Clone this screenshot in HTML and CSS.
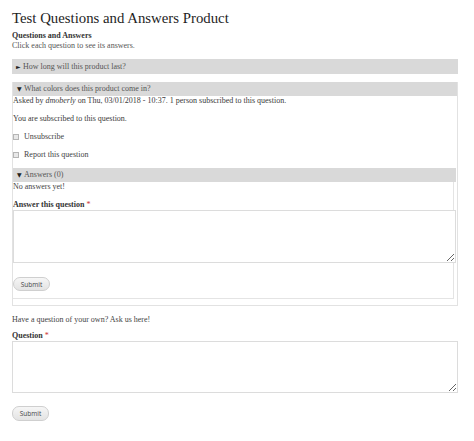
FILE: index.html
```html
<!DOCTYPE html>
<html>
<head>
<meta charset="utf-8">
<link rel="stylesheet" href="styles.css">
</head>
<body>
<div class="page">
  <h1 class="title">Test Questions and Answers Product</h1>
  <h2 class="section-title">Questions and Answers</h2>
  <p class="intro">Click each question to see its answers.</p>

  <div class="question">
    <div class="summary"><span class="arrow">&#9658;</span>How long will this product last?</div>
  </div>

  <div class="question open">
    <div class="summary"><span class="arrow">&#9660;</span>What colors does this product come in?</div>
    <div class="q-body">
      <p class="meta">Asked by <em>dmoberly</em> on Thu, 03/01/2018 - 10:37. 1 person subscribed to this question.</p>
      <p class="line">You are subscribed to this question.</p>
      <label class="check"><span class="box"></span>Unsubscribe</label>
      <label class="check"><span class="box"></span>Report this question</label>
      <div class="answers">
        <div class="summary"><span class="arrow">&#9660;</span>Answers (0)</div>
        <p class="none">No answers yet!</p>
        <div class="field">
          <div class="label">Answer this question <span class="req">*</span></div>
          <textarea class="text"></textarea>
        </div>
        <button class="btn">Submit</button>
      </div>
    </div>
  </div>

  <p class="ask">Have a question of your own? Ask us here!</p>
  <div class="field ask-field">
    <div class="label">Question <span class="req">*</span></div>
    <textarea class="text"></textarea>
  </div>
  <button class="btn btn-last">Submit</button>
</div>
</body>
</html>
```

FILE: styles.css
```css
html, body {
  margin: 0;
  padding: 0;
  background: #fff;
}
.page {
  padding: 9px 16px 0 12px;
  font-family: "Liberation Serif", serif;
  font-size: 8px;
  line-height: 10px;
  color: #3a3a3a;
}
.title {
  margin: 0;
  font-size: 14.8px;
  line-height: 18px;
  font-weight: normal;
  color: #1e1e1e;
}
.section-title {
  margin: 4px 0 0;
  font-size: 8px;
  line-height: 10px;
  font-weight: bold;
  color: #333;
}
.intro {
  margin: 0;
  color: #555;
}
.question {
  margin-top: 8px;
}
.question.open {
  border: 1px solid #e2e2e2;
  border-top: none;
}
.summary {
  height: 14px;
  line-height: 14px;
  background: #d9d9d9;
  color: #555;
  padding-left: 4px;
}
.question:first-of-type .summary {
  height: 15px;
  line-height: 15px;
}
.arrow {
  display: inline-block;
  width: 7px;
  font-family: "DejaVu Sans", sans-serif;
  font-size: 6px;
  color: #222;
}
.q-body p {
  margin: 0;
}
.meta em {
  font-style: italic;
}
.line {
  margin-top: 8px !important;
}
.check {
  display: flex;
  align-items: center;
  margin-top: 8px;
  height: 10px;
  color: #444;
}
.box {
  width: 4px;
  height: 4px;
  border: 1px solid #b5b5b5;
  background: #e8e8e8;
  margin-right: 5px;
}
.answers {
  margin-top: 8px;
  border: 1px solid #e4e4e4;
  border-top: none;
  border-left: none;
  margin-right: 3px;
  margin-bottom: 6px;
  padding-bottom: 7px;
}
.answers .summary {
  margin-right: -3px;
}
.none {
  color: #444;
}
.field {
  margin-top: 8px;
}
.label {
  font-weight: bold;
  color: #333;
}
.req {
  color: #c33;
  font-weight: normal;
}
.text {
  display: block;
  width: 100%;
  box-sizing: border-box;
  height: 53px;
  margin: 0;
  border: 1px solid #dcdcdc;
  background: #fff;
  font-family: inherit;
  font-size: 8px;
}
.answers .text {
  width: calc(100% + 3px);
}
.btn {
  display: block;
  margin-top: 14px;
  width: 37px;
  height: 14px;
  padding: 0;
  border: 1px solid #cfcfcf;
  border-radius: 7px;
  background: linear-gradient(#f6f6f6, #e3e3e3);
  font-family: "Open Sans", sans-serif;
  font-size: 6.5px;
  color: #444;
}
.ask {
  margin: 9px 0 0;
  color: #444;
}
.ask-field {
  margin-top: 6px;
}
.ask-field .text {
  height: 52px;
}
.btn-last {
  margin-top: 13px;
  height: 15px;
}
```
